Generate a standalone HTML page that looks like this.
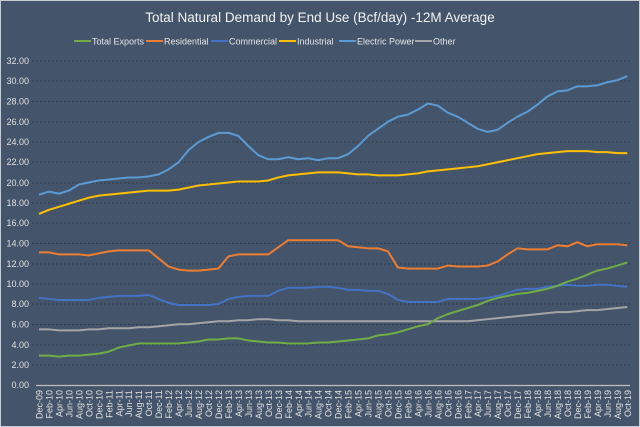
<!DOCTYPE html>
<html><head><meta charset="utf-8"><style>
html,body{margin:0;padding:0;background:#44546a;}
svg{display:block;font-family:"Liberation Sans",sans-serif;}
</style></head><body>
<svg width="640" height="427" viewBox="0 0 640 427" xmlns="http://www.w3.org/2000/svg">
<rect x="0" y="0" width="640" height="427" fill="#44546a"/>
<rect x="0.5" y="0.5" width="639" height="426" fill="none" stroke="#c8ccd2" stroke-width="1"/>
<text x="320" y="22" font-size="13.5" fill="#f2f2f2" text-anchor="middle">Total Natural Demand by End Use (Bcf/day) -12M Average</text>
<g font-size="9" fill="#e6e6e6">
<line x1="74" y1="41" x2="91" y2="41" stroke="#70ad47" stroke-width="2"/><text x="92" y="44.5">Total Exports</text>
<line x1="146" y1="41" x2="163" y2="41" stroke="#ed7d31" stroke-width="2"/><text x="164" y="44.5">Residential</text>
<line x1="211" y1="41" x2="228" y2="41" stroke="#4472c4" stroke-width="2"/><text x="229" y="44.5">Commercial</text>
<line x1="279" y1="41" x2="296" y2="41" stroke="#ffc000" stroke-width="2"/><text x="297" y="44.5">Industrial</text>
<line x1="339" y1="41" x2="356" y2="41" stroke="#5b9bd5" stroke-width="2"/><text x="357" y="44.5">Electric Power</text>
<line x1="415" y1="41" x2="432" y2="41" stroke="#a5a5a5" stroke-width="2"/><text x="433" y="44.5">Other</text>
</g>
<g stroke="#2f3c4d" stroke-width="1" stroke-dasharray="2,2">
<line x1="32" y1="61" x2="630" y2="61"/><line x1="32" y1="81" x2="630" y2="81"/><line x1="32" y1="101.5" x2="630" y2="101.5"/><line x1="32" y1="122" x2="630" y2="122"/><line x1="32" y1="142" x2="630" y2="142"/><line x1="32" y1="162" x2="630" y2="162"/><line x1="32" y1="183" x2="630" y2="183"/><line x1="32" y1="203" x2="630" y2="203"/><line x1="32" y1="223" x2="630" y2="223"/><line x1="32" y1="243.5" x2="630" y2="243.5"/><line x1="32" y1="264" x2="630" y2="264"/><line x1="32" y1="284" x2="630" y2="284"/><line x1="32" y1="304" x2="630" y2="304"/><line x1="32" y1="324.5" x2="630" y2="324.5"/><line x1="32" y1="345" x2="630" y2="345"/><line x1="32" y1="365" x2="630" y2="365"/>
</g>
<g font-size="9" fill="#e0e0e0" text-anchor="end">
<text x="29" y="64">32.00</text><text x="29" y="84">30.00</text><text x="29" y="104.5">28.00</text><text x="29" y="125">26.00</text><text x="29" y="145">24.00</text><text x="29" y="165">22.00</text><text x="29" y="186">20.00</text><text x="29" y="206">18.00</text><text x="29" y="226">16.00</text><text x="29" y="246.5">14.00</text><text x="29" y="267">12.00</text><text x="29" y="287">10.00</text><text x="29" y="307">8.00</text><text x="29" y="327.5">6.00</text><text x="29" y="348">4.00</text><text x="29" y="368">2.00</text><text x="29" y="388">0.00</text>
</g>
<line x1="36" y1="385.5" x2="630" y2="385.5" stroke="#bfbfbf" stroke-width="1.2"/>
<g fill="none" stroke-width="2" stroke-linejoin="round" transform="translate(39,385) scale(9.97,-10.125)">
<polyline vector-effect="non-scaling-stroke" stroke="#a5a5a5" points="0,5.5 1,5.5 2,5.4 3,5.4 4,5.4 5,5.5 6,5.5 7,5.6 8,5.6 9,5.6 10,5.7 11,5.7 12,5.8 13,5.9 14,6.0 15,6.0 16,6.1 17,6.2 18,6.3 19,6.3 20,6.4 21,6.4 22,6.5 23,6.5 24,6.4 25,6.4 26,6.3 27,6.3 28,6.3 29,6.3 30,6.3 31,6.3 32,6.3 33,6.3 34,6.3 35,6.3 36,6.3 37,6.3 38,6.3 39,6.3 40,6.3 41,6.3 42,6.3 43,6.3 44,6.4 45,6.5 46,6.6 47,6.7 48,6.8 49,6.9 50,7.0 51,7.1 52,7.2 53,7.2 54,7.3 55,7.4 56,7.4 57,7.5 58,7.6 59,7.7"/>
<polyline vector-effect="non-scaling-stroke" stroke="#4472c4" points="0,8.6 1,8.5 2,8.4 3,8.4 4,8.4 5,8.4 6,8.6 7,8.7 8,8.8 9,8.8 10,8.8 11,8.9 12,8.5 13,8.1 14,7.9 15,7.9 16,7.9 17,7.9 18,8.0 19,8.5 20,8.7 21,8.8 22,8.8 23,8.8 24,9.3 25,9.6 26,9.6 27,9.6 28,9.7 29,9.7 30,9.6 31,9.4 32,9.4 33,9.3 34,9.3 35,9.0 36,8.4 37,8.2 38,8.2 39,8.2 40,8.2 41,8.5 42,8.5 43,8.5 44,8.5 45,8.6 46,8.8 47,9.1 48,9.4 49,9.5 50,9.5 51,9.7 52,9.8 53,9.9 54,9.8 55,9.8 56,9.9 57,9.9 58,9.8 59,9.7"/>
<polyline vector-effect="non-scaling-stroke" stroke="#ed7d31" points="0,13.1 1,13.1 2,12.9 3,12.9 4,12.9 5,12.8 6,13.0 7,13.2 8,13.3 9,13.3 10,13.3 11,13.3 12,12.5 13,11.7 14,11.4 15,11.3 16,11.3 17,11.4 18,11.5 19,12.7 20,12.9 21,12.9 22,12.9 23,12.9 24,13.6 25,14.3 26,14.3 27,14.3 28,14.3 29,14.3 30,14.3 31,13.7 32,13.6 33,13.5 34,13.5 35,13.2 36,11.6 37,11.5 38,11.5 39,11.5 40,11.5 41,11.8 42,11.7 43,11.7 44,11.7 45,11.8 46,12.2 47,12.9 48,13.5 49,13.4 50,13.4 51,13.4 52,13.8 53,13.7 54,14.1 55,13.7 56,13.9 57,13.9 58,13.9 59,13.8"/>
<polyline vector-effect="non-scaling-stroke" stroke="#70ad47" points="0,2.9 1,2.9 2,2.8 3,2.9 4,2.9 5,3.0 6,3.1 7,3.3 8,3.7 9,3.9 10,4.1 11,4.1 12,4.1 13,4.1 14,4.1 15,4.2 16,4.3 17,4.5 18,4.5 19,4.6 20,4.6 21,4.4 22,4.3 23,4.2 24,4.2 25,4.1 26,4.1 27,4.1 28,4.2 29,4.2 30,4.3 31,4.4 32,4.5 33,4.6 34,4.9 35,5.0 36,5.2 37,5.5 38,5.8 39,6.0 40,6.6 41,7.0 42,7.3 43,7.6 44,7.9 45,8.3 46,8.6 47,8.8 48,9.0 49,9.1 50,9.3 51,9.5 52,9.8 53,10.2 54,10.5 55,10.9 56,11.3 57,11.5 58,11.8 59,12.1"/>
<polyline vector-effect="non-scaling-stroke" stroke="#ffc000" points="0,16.9 1,17.3 2,17.6 3,17.9 4,18.2 5,18.5 6,18.7 7,18.8 8,18.9 9,19.0 10,19.1 11,19.2 12,19.2 13,19.2 14,19.3 15,19.5 16,19.7 17,19.8 18,19.9 19,20.0 20,20.1 21,20.1 22,20.1 23,20.2 24,20.5 25,20.7 26,20.8 27,20.9 28,21.0 29,21.0 30,21.0 31,20.9 32,20.8 33,20.8 34,20.7 35,20.7 36,20.7 37,20.8 38,20.9 39,21.1 40,21.2 41,21.3 42,21.4 43,21.5 44,21.6 45,21.8 46,22.0 47,22.2 48,22.4 49,22.6 50,22.8 51,22.9 52,23.0 53,23.1 54,23.1 55,23.1 56,23.0 57,23.0 58,22.9 59,22.9"/>
<polyline vector-effect="non-scaling-stroke" stroke="#5b9bd5" points="0,18.8 1,19.1 2,18.9 3,19.2 4,19.8 5,20.0 6,20.2 7,20.3 8,20.4 9,20.5 10,20.5 11,20.6 12,20.8 13,21.3 14,22.0 15,23.2 16,24.0 17,24.5 18,24.9 19,24.9 20,24.6 21,23.6 22,22.7 23,22.3 24,22.3 25,22.5 26,22.3 27,22.4 28,22.2 29,22.4 30,22.4 31,22.8 32,23.6 33,24.6 34,25.3 35,26.0 36,26.5 37,26.7 38,27.2 39,27.8 40,27.6 41,26.9 42,26.5 43,25.9 44,25.3 45,25.0 46,25.2 47,25.9 48,26.5 49,27.0 50,27.7 51,28.5 52,29.0 53,29.1 54,29.5 55,29.5 56,29.6 57,29.9 58,30.1 59,30.5"/>
</g>
<g font-size="9" fill="#e0e0e0" text-anchor="end" id="xl">
<text transform="translate(42.5,390) rotate(-90)">Dec-09</text>
<text transform="translate(52.5,390) rotate(-90)">Feb-10</text><text transform="translate(62.4,390) rotate(-90)">Apr-10</text><text transform="translate(72.4,390) rotate(-90)">Jun-10</text><text transform="translate(82.4,390) rotate(-90)">Aug-10</text><text transform="translate(92.4,390) rotate(-90)">Oct-10</text><text transform="translate(102.3,390) rotate(-90)">Dec-10</text>
<text transform="translate(112.3,390) rotate(-90)">Feb-11</text><text transform="translate(122.3,390) rotate(-90)">Apr-11</text><text transform="translate(132.2,390) rotate(-90)">Jun-11</text><text transform="translate(142.2,390) rotate(-90)">Aug-11</text><text transform="translate(152.2,390) rotate(-90)">Oct-11</text><text transform="translate(162.2,390) rotate(-90)">Dec-11</text>
<text transform="translate(172.1,390) rotate(-90)">Feb-12</text><text transform="translate(182.1,390) rotate(-90)">Apr-12</text><text transform="translate(192.1,390) rotate(-90)">Jun-12</text><text transform="translate(202,390) rotate(-90)">Aug-12</text><text transform="translate(212,390) rotate(-90)">Oct-12</text><text transform="translate(222,390) rotate(-90)">Dec-12</text>
<text transform="translate(232,390) rotate(-90)">Feb-13</text><text transform="translate(241.9,390) rotate(-90)">Apr-13</text><text transform="translate(251.9,390) rotate(-90)">Jun-13</text><text transform="translate(261.9,390) rotate(-90)">Aug-13</text><text transform="translate(271.8,390) rotate(-90)">Oct-13</text><text transform="translate(281.8,390) rotate(-90)">Dec-13</text>
<text transform="translate(291.8,390) rotate(-90)">Feb-14</text><text transform="translate(301.8,390) rotate(-90)">Apr-14</text><text transform="translate(311.7,390) rotate(-90)">Jun-14</text><text transform="translate(321.7,390) rotate(-90)">Aug-14</text><text transform="translate(331.7,390) rotate(-90)">Oct-14</text><text transform="translate(341.6,390) rotate(-90)">Dec-14</text>
<text transform="translate(351.6,390) rotate(-90)">Feb-15</text><text transform="translate(361.6,390) rotate(-90)">Apr-15</text><text transform="translate(371.6,390) rotate(-90)">Jun-15</text><text transform="translate(381.5,390) rotate(-90)">Aug-15</text><text transform="translate(391.5,390) rotate(-90)">Oct-15</text><text transform="translate(401.5,390) rotate(-90)">Dec-15</text>
<text transform="translate(411.4,390) rotate(-90)">Feb-16</text><text transform="translate(421.4,390) rotate(-90)">Apr-16</text><text transform="translate(431.4,390) rotate(-90)">Jun-16</text><text transform="translate(441.4,390) rotate(-90)">Aug-16</text><text transform="translate(451.3,390) rotate(-90)">Oct-16</text><text transform="translate(461.3,390) rotate(-90)">Dec-16</text>
<text transform="translate(471.3,390) rotate(-90)">Feb-17</text><text transform="translate(481.2,390) rotate(-90)">Apr-17</text><text transform="translate(491.2,390) rotate(-90)">Jun-17</text><text transform="translate(501.2,390) rotate(-90)">Aug-17</text><text transform="translate(511.2,390) rotate(-90)">Oct-17</text><text transform="translate(521.1,390) rotate(-90)">Dec-17</text>
<text transform="translate(531.1,390) rotate(-90)">Feb-18</text><text transform="translate(541.1,390) rotate(-90)">Apr-18</text><text transform="translate(551,390) rotate(-90)">Jun-18</text><text transform="translate(561,390) rotate(-90)">Aug-18</text><text transform="translate(571,390) rotate(-90)">Oct-18</text><text transform="translate(581,390) rotate(-90)">Dec-18</text>
<text transform="translate(590.9,390) rotate(-90)">Feb-19</text><text transform="translate(600.9,390) rotate(-90)">Apr-19</text><text transform="translate(610.9,390) rotate(-90)">Jun-19</text><text transform="translate(620.8,390) rotate(-90)">Aug-19</text><text transform="translate(630.8,390) rotate(-90)">Oct-19</text>
</g>
</svg>
</body></html>
